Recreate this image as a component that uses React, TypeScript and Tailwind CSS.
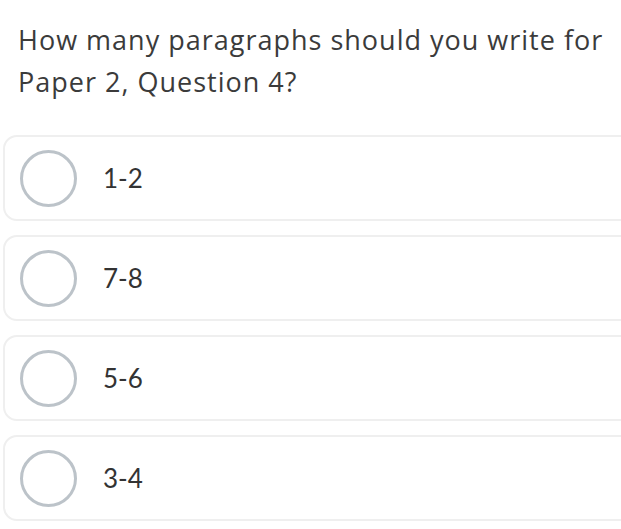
const options = ['1-2', '7-8', '5-6', '3-4'];

export default function App() {
  return (
    <div className="h-[529px] w-[621px] overflow-hidden bg-white font-['Lato',sans-serif]">
      <h1 className="ml-[18px] mt-[19px] w-[603px] font-['Open_Sans',sans-serif] text-[27px] font-normal leading-[42px] tracking-[1px] text-[#3b3b3b]">
        How many paragraphs should you write for
        <br />
        Paper 2, Question 4?
      </h1>

      <div className="ml-[3px] mt-[32px] flex w-[660px] flex-col gap-[14px]">
        {options.map((opt) => (
          <div
            key={opt}
            className="flex h-[86px] items-center gap-[26px] rounded-[14px] border-2 border-[#efefef] pl-[15px]"
          >
            <div className="h-[57px] w-[57px] rounded-full border-[3px] border-[#bcc3c9]" />
            <span className="text-[26px] text-[#333333]">{opt}</span>
          </div>
        ))}
      </div>
    </div>
  );
}
